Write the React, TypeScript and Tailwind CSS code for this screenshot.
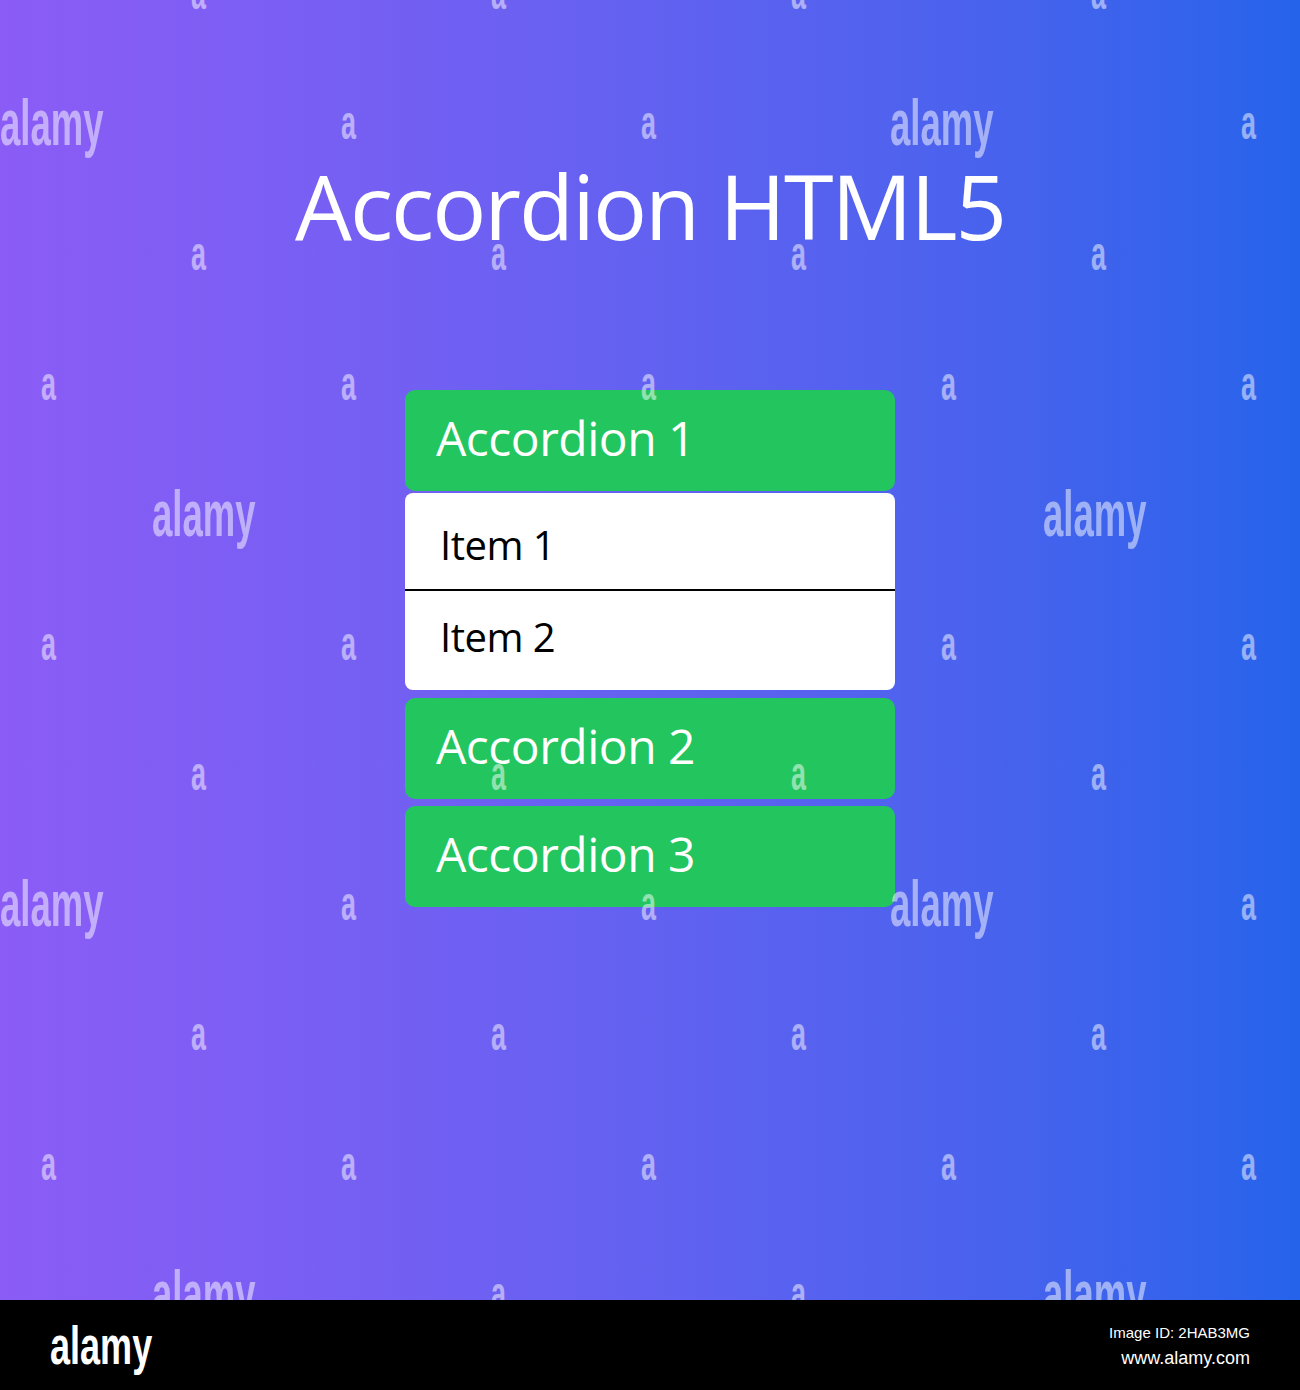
import React from "react";

const sans = { fontFamily: '"Open Sans", "Noto Sans", sans-serif' };
const mark = { fontFamily: '"Liberation Sans", Arial, sans-serif' };

// faint stock-mark overlay; y is the vertical centre of each row
const words: [number, number][] = [
  [0, 127], [890, 127], [152, 518], [1043, 518],
  [0, 908], [890, 908], [152, 1298], [1043, 1298],
];

const rowA = [48, 348, 648, 948, 1248];
const rowB = [198, 498, 798, 1098];
const letters: [number, number][] = [
  ...rowB.map((x) => [x, -3] as [number, number]),
  ...[348, 648, 1248].map((x) => [x, 127] as [number, number]),
  ...rowB.map((x) => [x, 258] as [number, number]),
  ...rowA.map((x) => [x, 388] as [number, number]),
  ...[498, 798].map((x) => [x, 518] as [number, number]),
  ...rowA.map((x) => [x, 648] as [number, number]),
  ...rowB.map((x) => [x, 778] as [number, number]),
  ...[348, 648, 1248].map((x) => [x, 908] as [number, number]),
  ...rowB.map((x) => [x, 1038] as [number, number]),
  ...rowA.map((x) => [x, 1168] as [number, number]),
  ...[498, 798].map((x) => [x, 1298] as [number, number]),
];

function Header({ label }: { label: string }) {
  return (
    <div className="flex h-[101px] items-center rounded-[10px] bg-[#22c55e] pb-[6px] pl-[31px]">
      <span className="text-[48px] leading-none tracking-[-0.5px] text-white" style={sans}>
        {label}
      </span>
    </div>
  );
}

function Item({ label, h }: { label: string; h: string }) {
  return (
    <div className={`flex items-center pl-[35px] ${h}`}>
      <span className="text-[40px] leading-none tracking-[-0.5px] text-black" style={sans}>
        {label}
      </span>
    </div>
  );
}

export default function App() {
  return (
    <div className="w-[1300px]">
      <div className="relative h-[1300px] overflow-hidden bg-gradient-to-r from-[#8b5cf6] to-[#2563eb]">
        <div className="flex flex-col items-center pt-[160px]">
          <h1 className="text-[90px] leading-none tracking-[-2px] text-white" style={sans}>
            Accordion HTML5
          </h1>
          <div className="mt-[140px] flex w-[490px] flex-col">
            <Header label="Accordion 1" />
            <div className="mt-[2px] flex flex-col rounded-[8px] bg-white">
              <Item label="Item 1" h="h-[96px] pt-[7px]" />
              <div className="h-[2px] bg-black" />
              <Item label="Item 2" h="h-[99px] pb-[8px]" />
            </div>
            <div className="mt-[8px] flex flex-col gap-[7px]">
              <Header label="Accordion 2" />
              <Header label="Accordion 3" />
            </div>
          </div>
        </div>

        {words.map(([x, y], i) => (
          <span
            key={`w${i}`}
            className="pointer-events-none absolute origin-left scale-x-[0.57] text-[64px] font-bold leading-none text-white/50"
            style={{ ...mark, left: x, top: y - 36 }}
          >
            alamy
          </span>
        ))}
        {letters.map(([x, y], i) => (
          <span
            key={`a${i}`}
            className="pointer-events-none absolute origin-left scale-x-[0.56] text-[48px] font-bold leading-none text-white/50"
            style={{ ...mark, left: x - 7, top: y - 28 }}
          >
            a
          </span>
        ))}
      </div>

      <div className="flex h-[90px] items-center justify-between bg-black pl-[50px] pr-[50px]">
        <span
          className="origin-left scale-x-[0.68] text-[53px] font-bold leading-none text-white"
          style={mark}
        >
          alamy
        </span>
        <div className="flex flex-col items-end gap-[9px] pt-[2px] text-white" style={mark}>
          <span className="text-[15px] leading-none">Image ID: 2HAB3MG</span>
          <span className="text-[18px] leading-none">www.alamy.com</span>
        </div>
      </div>
    </div>
  );
}
